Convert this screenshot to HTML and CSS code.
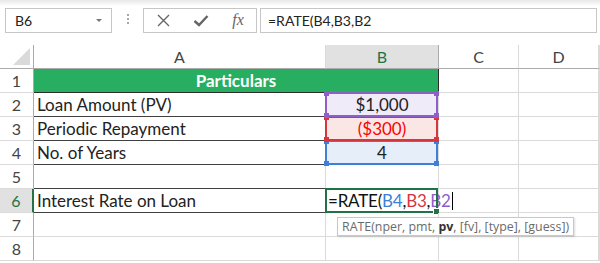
FILE: index.html
```html
<!DOCTYPE html>
<html lang="en">
<head>
    <meta charset="UTF-8">
    <title>RATE formula</title>
    <link rel="stylesheet" href="styles.css">
</head>
<body>
    <div class="toolbar">
        <div class="namebox">
            <span>B6</span>
            <span class="arrow"></span>
        </div>
        <div class="grip"><i></i><i></i><i></i></div>
        <div class="fxbuttons">
            <span class="btn">
                <svg width="13" height="13" viewBox="0 0 13 13"><path d="M1 1 L12 12 M12 1 L1 12" stroke="#666" stroke-width="1.4" fill="none"/></svg>
            </span>
            <span class="btn">
                <svg width="16" height="13" viewBox="0 0 16 13"><path d="M1.5 7 L6 11 L14.5 2" stroke="#666" stroke-width="2.4" fill="none"/></svg>
            </span>
            <span class="btn fx">fx</span>
        </div>
        <div class="formula">=RATE(B4,B3,B2</div>
    </div>

    <div class="sheet">
        <!-- header row -->
        <div class="cell corner"><span class="tri"></span></div>
        <div class="cell hd">A</div>
        <div class="cell hd picked">B</div>
        <div class="cell hd">C</div>
        <div class="cell hd">D</div>
        <div class="cell hd"></div>

        <!-- row 1 -->
        <div class="cell rh">1</div>
        <div class="cell title">Particulars</div>
        <div class="cell"></div>
        <div class="cell"></div>
        <div class="cell"></div>

        <!-- row 2 -->
        <div class="cell rh">2</div>
        <div class="cell label boxed">Loan Amount (PV)</div>
        <div class="cell num fill-purple">
            <span class="range purple"><i class="h tl"></i><i class="h tr"></i><i class="h bl"></i><i class="h br"></i></span>
            $1,000
        </div>
        <div class="cell"></div>
        <div class="cell"></div>
        <div class="cell"></div>

        <!-- row 3 -->
        <div class="cell rh">3</div>
        <div class="cell label boxed">Periodic Repayment</div>
        <div class="cell num neg fill-red">
            <span class="range red"><i class="h tl"></i><i class="h tr"></i><i class="h bl"></i><i class="h br"></i></span>
            ($300)
        </div>
        <div class="cell"></div>
        <div class="cell"></div>
        <div class="cell"></div>

        <!-- row 4 -->
        <div class="cell rh">4</div>
        <div class="cell label boxed">No. of Years</div>
        <div class="cell num fill-blue">
            <span class="range blue"><i class="h tl"></i><i class="h tr"></i><i class="h bl"></i><i class="h br"></i></span>
            4
        </div>
        <div class="cell"></div>
        <div class="cell"></div>
        <div class="cell"></div>

        <!-- row 5 -->
        <div class="cell rh">5</div>
        <div class="cell boxed"></div>
        <div class="cell"></div>
        <div class="cell"></div>
        <div class="cell"></div>
        <div class="cell"></div>

        <!-- row 6 -->
        <div class="cell rh active-row">6</div>
        <div class="cell label boxed">Interest Rate on Loan</div>
        <div class="cell edit">
            <span class="range green"><i class="h br"></i></span>
            =RATE(<span class="c-blue">B4</span>,<span class="c-red">B3</span>,<span class="c-purple">B2</span><span class="caret"></span>
        </div>
        <div class="cell"></div>
        <div class="cell"></div>
        <div class="cell"></div>

        <!-- row 7 -->
        <div class="cell rh">7</div>
        <div class="cell"></div>
        <div class="cell">
            <div class="tip">RATE(nper, pmt, <b>pv</b>, [fv], [type], [guess])</div>
        </div>
        <div class="cell"></div>
        <div class="cell"></div>
        <div class="cell"></div>

        <!-- row 8 -->
        <div class="cell rh">8</div>
        <div class="cell"></div>
        <div class="cell"></div>
        <div class="cell"></div>
        <div class="cell"></div>
        <div class="cell"></div>
    </div>
</body>
</html>
```

FILE: styles.css
```css
body {
    margin: 0;
    width: 600px;
    height: 263px;
    overflow: hidden;
    background: #fff;
    font-family: 'Lato', 'Liberation Sans', sans-serif;
    color: #222;
}
.toolbar {
    height: 45px;
    box-sizing: border-box;
    display: flex;
    align-items: flex-start;
    padding: 8px 3px 0 5px;
    background: linear-gradient(#e8e8e8 0, #fff 6px);
}
.namebox {
    width: 107px;
    height: 25px;
    box-sizing: border-box;
    border: 1px solid #c6c6c6;
    background: #fff;
    display: flex;
    align-items: center;
    justify-content: space-between;
    padding: 0 9px 0 9px;
    font-size: 14px;
}
.arrow {
    border-left: 3px solid transparent;
    border-right: 3px solid transparent;
    border-top: 3px solid #777;
}
.grip {
    width: 31px;
    display: flex;
    flex-direction: column;
    align-items: center;
    gap: 2px;
    padding-top: 6px;
}
.grip i {
    width: 2px;
    height: 2px;
    background: #a6a6a6;
}
.fxbuttons {
    width: 114px;
    height: 25px;
    box-sizing: border-box;
    border: 1px solid #c6c6c6;
    background: #fff;
    display: grid;
    grid-template-columns: 38px 38px 1fr;
}
.btn {
    display: flex;
    align-items: center;
    justify-content: center;
}
.fx {
    font-family: 'Liberation Serif', serif;
    font-style: italic;
    font-size: 16px;
    color: #666;
    padding-bottom: 2px;
}
.formula {
    flex: 1;
    margin-left: 3px;
    height: 25px;
    box-sizing: border-box;
    border: 1px solid #c6c6c6;
    background: #fff;
    padding-left: 7px;
    font-size: 14px;
    line-height: 23px;
}
.sheet {
    display: grid;
    grid-template-columns: 34px 292px 113px 80px 80px 1fr;
    grid-auto-rows: 24px;
}
.cell {
    position: relative;
    box-sizing: border-box;
    border-right: 1px solid #dadada;
    border-bottom: 1px solid #dadada;
    font-size: 17px;
    line-height: 23px;
    white-space: nowrap;
}
.corner {
    display: flex;
    justify-content: flex-end;
    align-items: flex-end;
    padding: 0 3px 3px 0;
    border-right-color: #ababab;
    border-bottom-color: #ababab;
}
.tri {
    width: 17px;
    height: 17px;
    background: #dadada;
    clip-path: polygon(100% 0, 100% 100%, 0 100%);
}
.hd {
    text-align: center;
    color: #444;
    font-size: 16px;
    border-bottom-color: #ababab;
}
.hd.picked {
    background: #e1e1e1;
    color: #217346;
    border-right-color: #ababab;
}
.rh {
    text-align: center;
    color: #444;
    font-size: 16px;
    border-right-color: #ababab;
}
.rh.active-row {
    background: #e1e1e1;
    color: #217346;
    border-right: 2px solid #217346;
}
.title {
    grid-column: span 2;
    background: #27ae60;
    color: #fff;
    font-weight: bold;
    text-align: center;
    border-right: 1px solid #2b2b2b;
    border-bottom: 1px solid #2b2b2b;
}
.label {
    padding-left: 3px;
}
.boxed {
    border-bottom-color: #404040;
}
.num {
    text-align: center;
}
.neg {
    color: #ff0000;
}
.fill-purple { background: #efebf8; }
.fill-red { background: #fbe6e6; }
.fill-blue { background: #e6eef9; }

.range {
    position: absolute;
    left: -1px;
    top: -1px;
    right: 0;
    bottom: -1px;
    border: 2px solid;
}
.range.purple { border-color: #8e5fc8; z-index: 3; }
.range.red { border-color: #d8363f; z-index: 2; }
.range.blue { border-color: #3f7fd6; z-index: 1; }
.range.green { border-color: #217346; }
.h {
    position: absolute;
    width: 5px;
    height: 5px;
}
.purple .h { background: #8e5fc8; }
.red .h { background: #d8363f; }
.blue .h { background: #3f7fd6; }
.green .h { background: #217346; outline: 1px solid #fff; }
.h.tl { left: -3px; top: -3px; }
.h.tr { right: -3px; top: -3px; }
.h.bl { left: -3px; bottom: -3px; }
.h.br { right: -3px; bottom: -3px; }

.edit {
    padding-left: 2px;
    color: #111;
    letter-spacing: -0.2px;
}
.c-blue { color: #3f7fd6; }
.c-red { color: #d8363f; }
.c-purple { color: #8e5fc8; }
.caret {
    display: inline-block;
    width: 1px;
    height: 18px;
    margin-left: 1px;
    background: #000;
    vertical-align: -3px;
}
.tip {
    position: absolute;
    left: 11px;
    top: 4px;
    z-index: 5;
    padding: 0 4px;
    background: #fff;
    border: 1px solid #c8c8c8;
    box-shadow: 1px 1px 2px rgba(0,0,0,0.15);
    font-family: 'Open Sans', 'Liberation Sans', sans-serif;
    font-size: 12.4px;
    line-height: 17px;
    color: #6b6b6b;
}
.tip b {
    color: #333;
}
```
